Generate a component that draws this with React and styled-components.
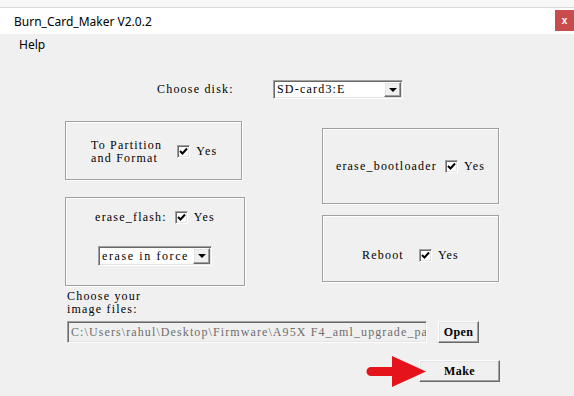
import React from "react";
import styled, { createGlobalStyle, css } from "styled-components";

const GlobalStyle = createGlobalStyle`
	html, body {
		margin: 0;
		padding: 0;
		background: #f0f0f0;
	}

	body {
		width: 574px;
		height: 396px;
		overflow: hidden;
		font-family: "Liberation Serif", "Times New Roman", serif;
	}
`;

const sunken = css`
	box-sizing: border-box;
	border-style: solid;
	border-width: 1px;
	border-color: #a0a0a0 #ffffff #ffffff #a0a0a0;
	box-shadow: inset 1px 1px 0 #696969, inset -1px -1px 0 #e3e3e3;
`;

const raised = css`
	box-sizing: border-box;
	border-style: solid;
	border-width: 1px;
	border-color: #ffffff #696969 #696969 #ffffff;
	box-shadow: inset -1px -1px 0 #a0a0a0, inset 1px 1px 0 #e3e3e3;
	background: #f0f0f0;
`;

const Window = styled.div`
	width: 574px;
	height: 396px;
	display: flex;
	flex-direction: column;
	background: #f0f0f0;
	color: #000;
`;

const TopEdge = styled.div`
	height: 7px;
	background: #f7f7f7;
	border-bottom: 1px solid #dadada;
`;

const TitleBar = styled.div`
	height: 26px;
	display: flex;
	align-items: center;
	justify-content: space-between;
	padding-left: 14px;
	background: #ffffff;
	font-family: "Noto Sans", "Open Sans", sans-serif;
	font-size: 12px;
	color: #000;
`;

const CloseButton = styled.div`
	width: 19px;
	height: 21px;
	align-self: flex-start;
	margin-top: 2px;
	display: flex;
	align-items: center;
	justify-content: center;
	background: #c84c4c;
	color: #fff;
	font-family: "Liberation Sans", sans-serif;
	font-weight: bold;
	font-size: 10px;
`;

const MenuBar = styled.div`
	height: 20px;
	display: flex;
	align-items: center;
	padding-left: 19px;
	font-family: "Noto Sans", "Open Sans", sans-serif;
	font-size: 12px;
`;

const Content = styled.div`
	display: flex;
	flex-direction: column;
	padding-top: 26px;
	font-size: 12px;
	line-height: 13px;
	letter-spacing: 1.2px;
`;

const DiskRow = styled.div`
	display: flex;
	align-items: center;
	height: 19px;
	padding-left: 157px;
`;

const DiskLabel = styled.span`
	width: 116px;
`;

const Select = styled.div`
	${ sunken };
	display: flex;
	align-items: stretch;
	width: ${ props => props.width }px;
	height: ${ props => props.height }px;
	padding: 1px;
	background: #ffffff;
`;

const SelectText = styled.span`
	flex: 1;
	display: flex;
	align-items: center;
	padding-left: 2px;
	white-space: nowrap;
	overflow: hidden;
	letter-spacing: ${ props => props.spacing }px;
`;

const DropButton = styled.span`
	${ raised };
	width: 17px;
	display: flex;
	align-items: center;
	justify-content: center;

	&::after {
		content: "";
		border-left: 4px solid transparent;
		border-right: 4px solid transparent;
		border-top: 4px solid #000;
	}
`;

const Panels = styled.div`
	display: grid;
	grid-template-columns: 180px 177px;
	column-gap: 77px;
	padding-left: 65px;
`;

const Column = styled.div`
	display: flex;
	flex-direction: column;
	align-items: flex-start;
	padding-top: ${ props => props.top }px;
	gap: ${ props => props.gap }px;
`;

const GroupBox = styled.div`
	box-sizing: border-box;
	width: ${ props => props.width }px;
	height: ${ props => props.height }px;
	padding-top: ${ props => props.padTop || 0 }px;
	padding-left: ${ props => props.padLeft || 0 }px;
	border: 1px solid #a0a0a0;
	box-shadow: inset 1px 1px 0 #ffffff, 1px 1px 0 #ffffff;
	display: flex;
	flex-direction: column;
	align-items: ${ props => props.align || "center" };
	justify-content: ${ props => props.justify || "center" };
	gap: ${ props => props.gap || 0 }px;
`;

const OptionRow = styled.div`
	display: flex;
	align-items: center;
	gap: ${ props => props.gap }px;
`;

const CheckGroup = styled.span`
	display: flex;
	align-items: center;
	gap: 6px;
`;

const CheckBoxFrame = styled.span`
	${ sunken };
	width: 13px;
	height: 13px;
	background: #ffffff;
	display: flex;
	align-items: center;
	justify-content: center;
`;

const FileSection = styled.div`
	display: flex;
	flex-direction: column;
	padding-left: 67px;
	padding-top: 4px;
`;

const FileLabel = styled.span`
	line-height: 13px;
`;

const FileRow = styled.div`
	display: flex;
	align-items: center;
	gap: 11px;
	margin-top: 5px;
`;

const PathField = styled.div`
	${ sunken };
	width: 360px;
	height: 22px;
	display: flex;
	align-items: center;
	padding-left: 3px;
	background: #f0f0f0;
	color: #6d6d6d;
	white-space: nowrap;
	overflow: hidden;
	letter-spacing: 1.1px;
`;

const PushButton = styled.div`
	${ raised };
	width: ${ props => props.width }px;
	height: 22px;
	display: flex;
	align-items: center;
	justify-content: center;
	font-weight: bold;
	letter-spacing: 0.4px;
`;

const MakeRow = styled.div`
	display: flex;
	margin-top: 17px;
	padding-left: 419px;
`;

const MakeWrap = styled.div`
	position: relative;
`;

const Pointer = styled.svg`
	position: absolute;
	left: -54px;
	top: -5px;
	pointer-events: none;
`;

function CheckBox( { label } ) {
	return <CheckGroup>
		<CheckBoxFrame>
			<svg width="9" height="9" viewBox="0 0 9 9">
				<polyline points="1,4 3.5,6.5 8,1.5" fill="none" stroke="#000" strokeWidth="2" />
			</svg>
		</CheckBoxFrame>
		<span>{ label }</span>
	</CheckGroup>;
}

function RedArrow() {
	return <Pointer width="62" height="34" viewBox="0 0 62 34">
		<path d="M6 12 H29 V21 H6 A4.5 4.5 0 0 1 6 12 Z" fill="#e5141b" />
		<polygon points="27,1 61,16.5 27,32" fill="#e5141b" />
	</Pointer>;
}

export default function App() {
	return <>
		<GlobalStyle />
		<Window>
			<TopEdge />
			<TitleBar>
				<span>Burn_Card_Maker V2.0.2</span>
				<CloseButton>x</CloseButton>
			</TitleBar>
			<MenuBar>Help</MenuBar>
			<Content>
				<DiskRow>
					<DiskLabel>Choose disk:</DiskLabel>
					<Select width={ 130 } height={ 19 }>
						<SelectText spacing={ 1.2 }>SD-card3:E</SelectText>
						<DropButton />
					</Select>
				</DiskRow>
				<Panels>
					<Column top={ 22 } gap={ 17 }>
						<GroupBox width={ 177 } height={ 59 } align="flex-start" padLeft={ 25 } padTop={ 2 }>
							<OptionRow gap={ 15 }>
								<span>To Partition<br />and Format</span>
								<CheckBox label="Yes" />
							</OptionRow>
						</GroupBox>
						<GroupBox width={ 180 } height={ 89 } justify="flex-start" padTop={ 13 } gap={ 22 }>
							<OptionRow gap={ 8 }>
								<span>erase_flash:</span>
								<CheckBox label="Yes" />
							</OptionRow>
							<Select width={ 114 } height={ 20 }>
								<SelectText spacing={ 1.6 }>erase in force</SelectText>
								<DropButton />
							</Select>
						</GroupBox>
					</Column>
					<Column top={ 29 } gap={ 11 }>
						<GroupBox width={ 177 } height={ 76 }>
							<OptionRow gap={ 8 }>
								<span>erase_bootloader</span>
								<CheckBox label="Yes" />
							</OptionRow>
						</GroupBox>
						<GroupBox width={ 177 } height={ 67 } padTop={ 13 }>
							<OptionRow gap={ 15 }>
								<span>Reboot</span>
								<CheckBox label="Yes" />
							</OptionRow>
						</GroupBox>
					</Column>
				</Panels>
				<FileSection>
					<FileLabel>Choose your<br />image files:</FileLabel>
					<FileRow>
						<PathField>C:\Users\rahul\Desktop\Firmware\A95X F4_aml_upgrade_pa</PathField>
						<PushButton width={ 41 }>Open</PushButton>
					</FileRow>
				</FileSection>
				<MakeRow>
					<MakeWrap>
						<PushButton width={ 81 }>Make</PushButton>
						<RedArrow />
					</MakeWrap>
				</MakeRow>
			</Content>
		</Window>
	</>;
}
